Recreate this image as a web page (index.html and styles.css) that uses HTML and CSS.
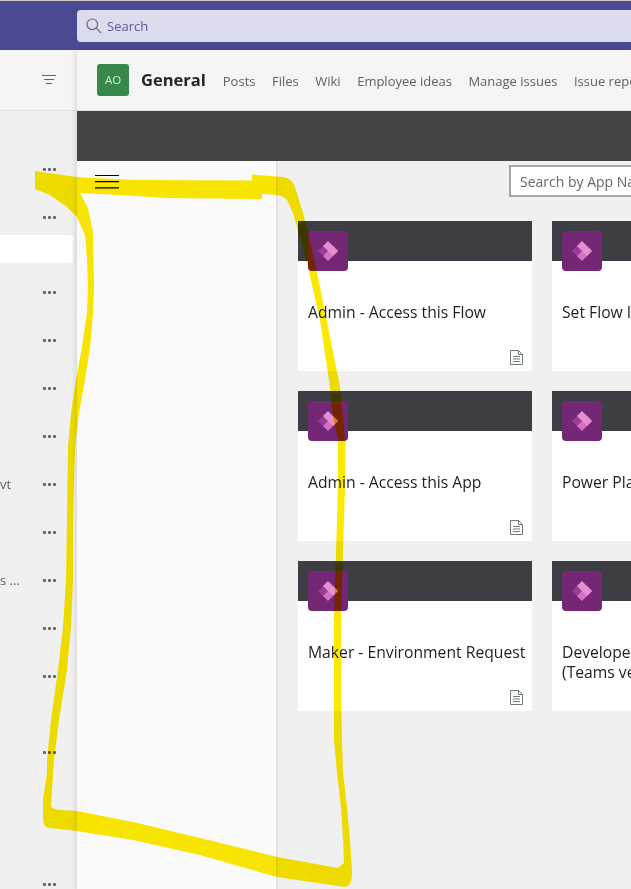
FILE: index.html
```html
<!DOCTYPE html>
<html lang="en">
<head>
<meta charset="utf-8">
<title>General</title>
<link rel="stylesheet" href="styles.css">
</head>
<body>
<div class="page">
  <header class="topbar">
    <div class="searchbox">
      <svg class="search-icon" width="16" height="16" viewBox="0 0 16 16"><circle cx="6.3" cy="6.3" r="5.3"/><path d="M10.2 10.2 15 15"/></svg>
      <span class="search-label">Search</span>
    </div>
  </header>
  <div class="shell">
    <aside class="sidebar">
      <div class="side-head">
        <svg class="filter-icon" width="14" height="10" viewBox="0 0 14 10"><path d="M0 .5h14M2 4.5h10M4 8.5h6"/></svg>
      </div>
      <div class="side-list">
        <div class="row row-a"><span class="dots"><i></i><i></i><i></i></span></div>
        <div class="row row-b"><span class="dots"><i></i><i></i><i></i></span></div>
        <div class="selected"></div>
        <div class="row"><span class="dots"><i></i><i></i><i></i></span></div>
        <div class="row"><span class="dots"><i></i><i></i><i></i></span></div>
        <div class="row"><span class="dots"><i></i><i></i><i></i></span></div>
        <div class="row"><span class="dots"><i></i><i></i><i></i></span></div>
        <div class="row"><span class="row-text">vt</span><span class="dots"><i></i><i></i><i></i></span></div>
        <div class="row"><span class="dots"><i></i><i></i><i></i></span></div>
        <div class="row"><span class="row-text">s ...</span><span class="dots"><i></i><i></i><i></i></span></div>
        <div class="row"><span class="dots"><i></i><i></i><i></i></span></div>
        <div class="row"><span class="dots"><i></i><i></i><i></i></span></div>
        <div class="row row-c"><span class="dots"><i></i><i></i><i></i></span></div>
        <div class="row row-d"><span class="dots"><i></i><i></i><i></i></span></div>
      </div>
    </aside>
    <main class="main">
      <div class="channel-head">
        <div class="avatar">AO</div>
        <h1 class="channel-name">General</h1>
        <nav class="tabs">
          <span>Posts</span><span>Files</span><span>Wiki</span><span>Employee ideas</span><span>Manage issues</span><span>Issue reports</span>
        </nav>
      </div>
      <div class="darkbar"></div>
      <div class="app">
        <div class="leftnav">
          <svg class="burger" width="24" height="14" viewBox="0 0 24 14"><path d="M0 .5h24M0 6.700h24M0 12.800h24"/></svg>
        </div>
        <div class="catalog">
          <div class="toolbar"><input class="app-search" type="text" placeholder="Search by App Name"></div>
          <div class="cards">
            <article class="card"><div class="card-top"><svg class="tile" width="40" height="40" viewBox="0 0 40 40"><use href="#pa"/></svg></div><h2 class="card-title">Admin - Access this Flow</h2><svg class="doc" width="13" height="15" viewBox="0 0 13 15"><use href="#doc"/></svg></article>
            <article class="card"><div class="card-top"><svg class="tile" width="40" height="40" viewBox="0 0 40 40"><use href="#pa"/></svg></div><h2 class="card-title">Set Flow Inventory</h2><svg class="doc" width="13" height="15" viewBox="0 0 13 15"><use href="#doc"/></svg></article>
            <article class="card"><div class="card-top"><svg class="tile" width="40" height="40" viewBox="0 0 40 40"><use href="#pa"/></svg></div><h2 class="card-title">Admin - Access this App</h2><svg class="doc" width="13" height="15" viewBox="0 0 13 15"><use href="#doc"/></svg></article>
            <article class="card"><div class="card-top"><svg class="tile" width="40" height="40" viewBox="0 0 40 40"><use href="#pa"/></svg></div><h2 class="card-title">Power Platform Admin View</h2><svg class="doc" width="13" height="15" viewBox="0 0 13 15"><use href="#doc"/></svg></article>
            <article class="card"><div class="card-top"><svg class="tile" width="40" height="40" viewBox="0 0 40 40"><use href="#pa"/></svg></div><h2 class="card-title">Maker - Environment Request</h2><svg class="doc" width="13" height="15" viewBox="0 0 13 15"><use href="#doc"/></svg></article>
            <article class="card"><div class="card-top"><svg class="tile" width="40" height="40" viewBox="0 0 40 40"><use href="#pa"/></svg></div><h2 class="card-title">Developer Compliance Center (Teams version)</h2><svg class="doc" width="13" height="15" viewBox="0 0 13 15"><use href="#doc"/></svg></article>
          </div>
        </div>
      </div>
    </main>
  </div>
  <svg class="defs" width="0" height="0">
    <defs>
      <g id="pa">
        <rect width="40" height="40" rx="4" fill="#742774"/>
        <path d="M10 20l7-7 7 7-7 7z" fill="#9c3a98"/>
        <path d="M30 20 20 30l-5-5 10-10z" fill="#d670c2"/>
        <path d="M20 10l10 10-5 5-10-10z" fill="#e48fd2"/>
      </g>
      <g id="doc" fill="none" stroke="#737b7f">
        <path d="M.5.5h8l4 4v10H.5zM8.500.5v4h4"/>
        <path d="M3 6.500h7M3 9h7M3 11.500h7"/>
      </g>
    </defs>
  </svg>
  <svg class="scribble" width="631" height="889" viewBox="0 0 631 889">
    <path d="M35 171 77 177 133 180 252 180.500 252 174.500 283 177Q290 178 293 183L295 187 303 213 310 240 320 287 330 337 340 387 343 417 345 440 345 487 343 553 341 620 341 687 342 740 343 773 347 807 350 840 352 872Q352 886 345 887L277 877 200 855 133 840 77 831 50 828Q43 827 43 820L43 800 47 773 47 760 51 720 58 670 63 627 66 580 67 520 68 447 71 413 76 380 82 347 87 313 88 285 87 258 85 235 77 217 67 207 50 195 35 189Z M80 193 120 195 167 198 262 199 262 194 277 195Q284 196 287 200L293 213 297 227 308 267 320 320 330 387 333 417 338 440 338 487 336 553 334 620 334 687 334 740 337 773 341 807 343 840 344 863 338 868 277 857 200 838 133 822 77 811 60 810Q52 809 51 806L54 760 59 720 67 670 71 627 73 580 73 520 75 447 79 413 85 380 90 347 93 313 94 285 93 232 88 208Z"/>
  </svg>
</div>
</body>
</html>
```

FILE: styles.css
```css
* { box-sizing: border-box; }
html, body { margin: 0; height: 100%; overflow: hidden; }
body { font-family: "Open Sans", "Noto Sans", sans-serif; color: #252423; background: #f0f0f0; }
.page { position: relative; width: 631px; height: 889px; overflow: hidden; }

.topbar { height: 50px; background: #484a93; border-top: 1px solid #d9c9c4; padding: 9px 0 8px 77px; }
.searchbox { height: 32px; width: 700px; background: #dcdcec; border-radius: 4px; display: flex; align-items: center; padding-left: 9px; gap: 5px; }
.search-icon { fill: none; stroke: #6a6a74; stroke-width: 1.2; flex: none; }
.search-label { font-size: 13px; color: #5a5a9c; }

.shell { display: flex; height: 839px; }
.sidebar { width: 77px; flex: none; background: #f0f0f0; display: flex; flex-direction: column; }
.side-head { height: 61px; flex: none; background: #f5f5f5; border-bottom: 1px solid #e0e0e0; display: flex; justify-content: flex-end; align-items: flex-start; padding: 25px 21px 0 0; }
.filter-icon { fill: none; stroke: #616161; stroke-width: 1; }
.side-list { padding-top: 34px; flex: 1; overflow: hidden; }
.row { height: 48px; display: flex; align-items: center; padding-right: 21.500px; font-size: 13px; color: #616161; }
.row-b { margin-bottom: -6px; }
.row-c { margin-top: 28px; }
.row-d { margin-top: 84px; }
.selected { height: 28px; width: 73px; background: #fff; border-radius: 0 3px 3px 0; margin-bottom: 5px; }
.row-text { white-space: nowrap; }
.dots { margin-left: auto; display: flex; gap: 2px; flex: none; }
.dots i { width: 3px; height: 3px; background: #666; border-radius: 1px; display: block; }

.main { width: 554px; flex: none; box-shadow: -2px 0 5px rgba(0, 0, 0, .1); position: relative; display: flex; flex-direction: column; }
.channel-head { height: 61px; flex: none; background: #f5f5f5; border-bottom: 1px solid #e0e0e0; display: flex; align-items: center; padding: 0 0 0 20px; white-space: nowrap; overflow: hidden; }
.avatar { width: 32px; height: 32px; border-radius: 3px; background: #36894a; color: #d5e8da; font-size: 11.500px; display: flex; align-items: center; justify-content: center; flex: none; margin-top: -1px; }
.channel-name { margin: 0 0 0 12px; font-size: 16.500px; font-weight: 700; color: #252423; line-height: 24px; }
.tabs { display: flex; gap: 16.500px; margin-left: 17px; padding-top: 2px; font-size: 13px; color: #616161; }
.darkbar { height: 50px; flex: none; background: #444; }
.app { flex: 1; display: flex; min-height: 0; }
.leftnav { width: 201px; flex: none; background: #fafafa; border-right: 2px solid #e3e3e3; padding: 14px 0 0 18px; }
.burger { display: block; fill: none; stroke: #000; stroke-width: 1.200; }
.catalog { flex: 1; background: #f0f0f0; padding: 4px 0 0 20px; min-width: 0; overflow: hidden; }
.toolbar { height: 56px; padding-left: 211px; }
.app-search { width: 200px; height: 32px; border: 2px solid #a6a6a6; background: #fff; padding: 0 9px; font: 14px "Open Sans", "Noto Sans", sans-serif; color: #666; border-radius: 0; outline: 0; display: block; }
.app-search::placeholder { color: #666; opacity: 1; }
.cards { display: grid; grid-template-columns: 234px 234px; gap: 20px; width: 488px; }
.card { height: 150px; background: #fff; display: flex; flex-direction: column; }
.card-top { height: 40px; flex: none; background: #3e3d43; padding: 10px 0 0 10px; }
.tile { display: block; }
.card-title { margin: 41px 0 0; padding: 0 2px 0 10px; font-size: 15.700px; font-weight: 500; line-height: 20px; color: #1f1e1d; }
.doc { display: block; margin: auto 9px 6px auto; flex: none; }

.defs { position: absolute; }
.scribble { position: absolute; left: 0; top: 0; pointer-events: none; mix-blend-mode: multiply; }
.scribble path { fill: #fce900; fill-rule: evenodd; }
```
